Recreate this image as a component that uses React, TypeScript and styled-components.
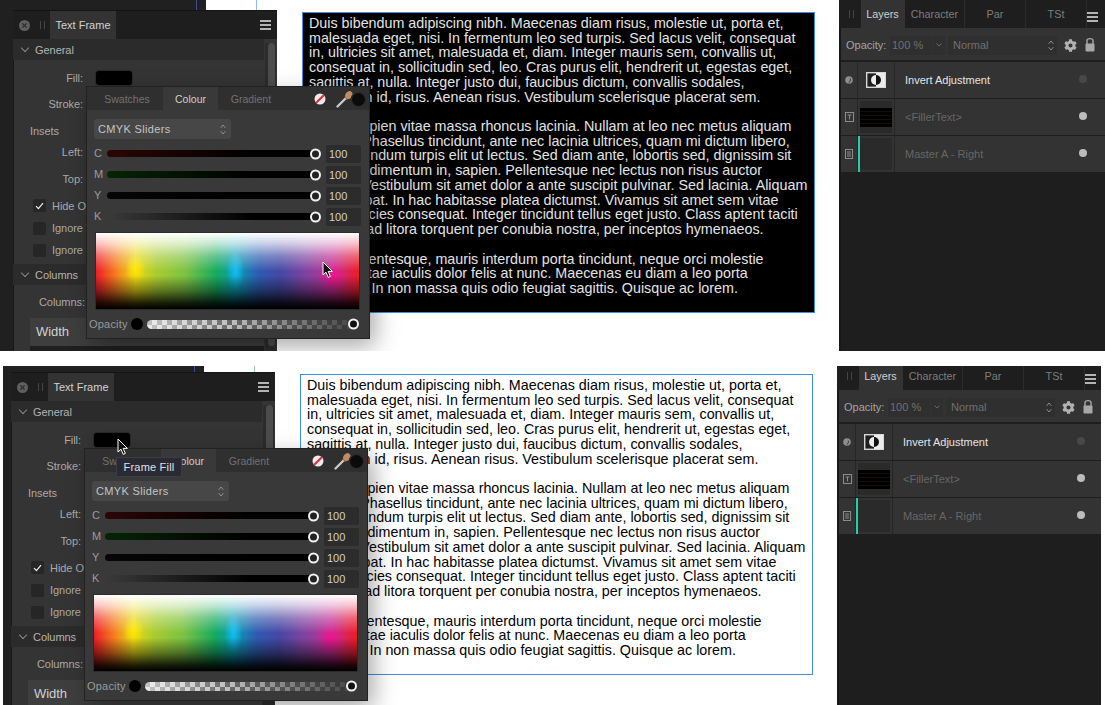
import { FC } from "react";
import styled, { createGlobalStyle } from "styled-components";
import { FaCog } from "react-icons/fa";

const GlobalStyle = createGlobalStyle`
  html, body { margin: 0; padding: 0; background: #fff; }
  body { font-family: "Liberation Sans", Arial, sans-serif; }
`;

// styled components
const Page = styled.div`
  width: 1105px;
  height: 705px;
  overflow: hidden;
  background: #fff;
  display: flex;
  flex-direction: column;
  gap: 15px;
`;

const Shot = styled.div<{ $left: number; $width: number; $height: number }>`
  position: relative;
  display: flex;
  flex: none;
  overflow: hidden;
  background: #fff;
  margin-left: ${(p) => p.$left}px;
  width: ${(p) => p.$width}px;
  height: ${(p) => p.$height}px;
`;

const Strip = styled.div<{ $width: number }>`
  flex: none;
  width: ${(p) => p.$width}px;
  background: #202020;
`;

const LeftColumn = styled.div`
  flex: none;
  width: 264px;
  display: flex;
  flex-direction: column;
`;

const DocEdge = styled.div<{ $height: number }>`
  flex: none;
  height: ${(p) => p.$height}px;
  background: linear-gradient(
    to right,
    #202020 0 183px,
    #3d4a9e 183px 184px,
    #202020 184px 193px,
    #fff 193px 243px,
    #8fbdf0 243px 244.5px,
    #fff 244.5px
  );
`;

const Panel = styled.div`
  flex: 1;
  min-height: 0;
  position: relative;
  overflow: hidden;
  background: #343434;
  border-top: 1px solid #141414;
  box-shadow: inset 1px 0 #171717;
  color: #a9a9a9;
  font-size: 11px;
  letter-spacing: -0.05px;
`;

const PanelHead = styled.div`
  height: 28px;
  display: flex;
  align-items: stretch;
  background: #1e1e1e;
`;

const CloseDot = styled.svg`
  width: 11px;
  height: 11px;
  margin: 9px 0 0 6px;
`;

const Grip = styled.span<{ $left: number }>`
  width: 3px;
  height: 8px;
  margin: 10px 0 0 ${(p) => p.$left}px;
  border-left: 1px solid #444;
  border-right: 1px solid #444;
`;

const HeadTab = styled.div`
  width: 66px;
  margin-left: 5px;
  background: #333;
  color: #d2d2d2;
  font-size: 11px;
  letter-spacing: 0;
  line-height: 28px;
  text-align: center;
`;

const Burger = styled.span`
  margin: 9px 0 0 auto;
  width: 11px;
  height: 2px;
  background: #b4b4b4;
  box-shadow: 0 4px #b4b4b4, 0 8px #b4b4b4;
`;

const PanelBurger = styled(Burger)`
  margin-right: 6px;
`;

const PanelBody = styled.div`
  margin-right: 13px;
`;

const ScrollThumb = styled.div`
  position: absolute;
  top: 32px;
  right: 1px;
  bottom: 0;
  width: 11px;
  background: #2c2c2c;

  &::after {
    content: "";
    position: absolute;
    top: 0;
    bottom: 5px;
    left: 3px;
    width: 7px;
    border-radius: 4px;
    background: #4c4c4c;
  }
`;

const SectionHead = styled.div<{ $gapTop?: number }>`
  height: 21px;
  margin-top: ${(p) => p.$gapTop ?? 0}px;
  display: flex;
  align-items: center;
  gap: 7px;
  padding-left: 9px;
  background: #2b2b2b;
  color: #b4b4b4;
`;

const Chevron = styled.span`
  width: 5px;
  height: 5px;
  margin: -3px 0 0 0;
  border-right: 1px solid #888;
  border-bottom: 1px solid #888;
  transform: rotate(45deg);
`;

const Field = styled.div<{ $h: number; $pad?: number }>`
  height: ${(p) => p.$h}px;
  display: flex;
  align-items: center;
  white-space: nowrap;
  padding-left: ${(p) => p.$pad ?? 0}px;
`;

const FieldLabel = styled.span`
  width: 70px;
  text-align: right;
`;

const WideLabel = styled(FieldLabel)`
  width: 72px;
`;

const Swatch = styled.span`
  width: 36px;
  height: 14px;
  margin-left: 13px;
  border-radius: 3px;
  background: #000;
  box-shadow: 0 0 0 1px #2a2a2a;
`;

const CheckBox = styled.span`
  width: 13px;
  height: 13px;
  margin-right: 6px;
  border-radius: 2px;
  background: #262626;
  display: flex;
  align-items: center;
  justify-content: center;
`;

const BodyGap = styled.div`
  height: 4px;
`;

const TableHead = styled.div`
  height: 28px;
  margin-left: 17px;
  padding-left: 6px;
  background: #3e3e3e;
  color: #d0d0d0;
  font-size: 13px;
  line-height: 28px;
`;

const TableRow = styled.div`
  height: 10px;
  margin-left: 17px;
  background: #1f1f1f;
`;

const Popover = styled.div<{ $left: number; $top: number }>`
  position: absolute;
  left: ${(p) => p.$left}px;
  top: ${(p) => p.$top}px;
  width: 282px;
  height: 251px;
  z-index: 3;
  background: #393939;
  color: #a4a4a4;
  font-size: 10.5px;
  box-shadow: 0 0 0 1px #222, 6px 8px 22px rgba(0, 0, 0, 0.35);
`;

const PopHead = styled.div`
  height: 23px;
  position: relative;
  display: flex;
  padding-left: 4px;
  background: #2f2f2f;
`;

const PopTab = styled.div<{ $w: number; $on?: boolean }>`
  width: ${(p) => p.$w}px;
  text-align: center;
  line-height: 24px;
  background: ${(p) => (p.$on ? "#393939" : "transparent")};
  color: ${(p) => (p.$on ? "#cfcfcf" : "#727272")};
`;

const PopTools = styled.div`
  position: absolute;
  right: 4px;
  top: 3px;
  display: flex;
  align-items: center;
`;

const NoFill = styled.svg`
  width: 12px;
  height: 12px;
  margin-right: 10px;
`;

const Pipette = styled.svg`
  width: 18px;
  height: 18px;
  margin-right: -2px;
`;

const CurrentColour = styled.span`
  width: 13px;
  height: 13px;
  border-radius: 50%;
  background: #0b0b0b;
  box-shadow: 0 0 0 1.5px #2c2c2c;
`;

const PopBody = styled.div`
  padding: 9px 7px 0;
`;

const SelectBox = styled.div`
  width: 137px;
  height: 20px;
  padding: 0 5px 0 4px;
  box-sizing: border-box;
  display: flex;
  align-items: center;
  justify-content: space-between;
  border-radius: 3px;
  background: #474747;
  color: #c4c4c4;
  font-size: 11px;
  letter-spacing: 0.35px;
`;

const Sliders = styled.div`
  margin-top: 4px;
`;

const SliderRow = styled.div`
  height: 21px;
  display: flex;
  align-items: center;
`;

const SliderName = styled.span`
  width: 13px;
  margin-top: -2px;
  font-size: 11px;
  color: #9b9b9b;
`;

const Track = styled.div<{ $tint: string }>`
  position: relative;
  width: 208px;
  height: 7px;
  border-radius: 4px;
  background: linear-gradient(to right, ${(p) => p.$tint}, #000 70%);
`;

const Thumb = styled.span`
  position: absolute;
  right: -6px;
  top: 50%;
  width: 7px;
  height: 7px;
  transform: translateY(-50%);
  border-radius: 50%;
  border: 2px solid #f2f2f2;
  background: #222;
`;

const ValueBox = styled.span`
  width: 35px;
  height: 18px;
  margin-left: 11px;
  padding-left: 3px;
  box-sizing: border-box;
  background: #2c2c2c;
  border-radius: 2px;
  color: #d0d0d0;
  font-size: 11px;
  line-height: 19px;
`;

const Spectrum = styled.div`
  width: 263px;
  height: 76px;
  margin: 6px 0 0 2px;
  background:
    linear-gradient(
      to bottom,
      #fff 0%,
      rgba(255, 255, 255, 0.72) 14%,
      rgba(255, 255, 255, 0.32) 30%,
      rgba(255, 255, 255, 0) 50%
    ),
    linear-gradient(
      to bottom,
      rgba(0, 0, 0, 0) 56%,
      rgba(0, 0, 0, 0.42) 76%,
      rgba(0, 0, 0, 0.85) 92%,
      #000 100%
    ),
    radial-gradient(ellipse 10px 14px at 15% 47%, #ffe600, rgba(255, 230, 0, 0) 100%),
    radial-gradient(ellipse 9px 20px at 53% 50%, #12bdf2, rgba(18, 189, 242, 0) 100%),
    radial-gradient(ellipse 14px 16px at 90% 58%, #ee1490, rgba(238, 20, 144, 0) 100%),
    linear-gradient(
      to right,
      #ee1c25 0%,
      #f5821f 8%,
      #ead816 15%,
      #a8cc30 23%,
      #7cc242 34%,
      #14aa60 46%,
      #0a9cb4 53%,
      #2f5ab0 62%,
      #4548a4 70%,
      #8043a0 80%,
      #c42e94 90%,
      #ee1c25 100%
    );
  box-shadow: 0 0 0 1px #2c2c2c;
`;

const OpacityRow = styled.div`
  position: relative;
  height: 20px;
  margin: 5px 0 0 -5px;
  display: flex;
  align-items: center;
`;

const OpacityName = styled.span`
  width: 42px;
  color: #999;
  font-size: 11px;
  letter-spacing: 0.2px;
`;

const OpacityDot = styled.span`
  width: 12px;
  height: 12px;
  border-radius: 50%;
  background: #000;
`;

const OpacityBar = styled.div`
  position: relative;
  width: 206px;
  height: 9px;
  margin-left: 4px;
  border-radius: 5px 0 0 5px;
  background:
    linear-gradient(to right, rgba(255, 255, 255, 0.6), rgba(57, 57, 57, 0.1) 40%, rgba(45, 45, 45, 0.85) 100%),
    repeating-conic-gradient(#cfcfcf 0 25%, #6e6e6e 0 50%) 0 0 / 10px 10px;
`;

const OpacityThumb = styled(Thumb)`
  background: #111;
`;

const Canvas = styled.div`
  flex: none;
  width: 562px;
  box-sizing: border-box;
  padding-left: 25px;
`;

const TextFrame = styled.div<{ $dark: boolean; $top: number }>`
  width: 513px;
  height: 301px;
  margin-top: ${(p) => p.$top}px;
  padding: 3px 0 0 6px;
  box-sizing: border-box;
  border: 1px solid #3f8de0;
  background: ${(p) => (p.$dark ? "#000" : "#fff")};
  color: ${(p) => (p.$dark ? "#e4e4e4" : "#000")};
  font-size: 14.3px;
  line-height: 14.72px;
`;

const TextLine = styled.div`
  height: 14.72px;
  white-space: pre;
`;

const RightPanel = styled.div`
  flex: 1;
  display: flex;
  flex-direction: column;
  background: #1e1e1e;
  box-shadow: inset 2px 0 #191919;
  color: #a9a9a9;
  font-size: 11px;
`;

const RightHead = styled.div<{ $height: number }>`
  flex: none;
  height: ${(p) => p.$height}px;
  display: flex;
  align-items: flex-end;
  background: #1e1e1e;
`;

const RightTab = styled.div<{ $w: number; $on?: boolean }>`
  width: ${(p) => p.$w}px;
  height: 100%;
  display: flex;
  align-items: flex-end;
  justify-content: center;
  padding-bottom: 8px;
  box-sizing: border-box;
  font-size: 10.8px;
  background: ${(p) => (p.$on ? "#333" : "transparent")};
  color: ${(p) => (p.$on ? "#cfcfcf" : "#7d7d7d")};
  border-right: 1px solid ${(p) => (p.$on ? "transparent" : "#2c2c2c")};
`;

const RightGrip = styled(Grip)`
  align-self: flex-end;
  margin: 0 7px 10px 10px;
`;

const RightBurger = styled(Burger)`
  align-self: flex-end;
  margin: 0 7px 14px auto;
`;

const Toolbar = styled.div`
  flex: none;
  height: 32px;
  margin-left: 2px;
  padding: 2px 0 0 5px;
  box-sizing: border-box;
  display: flex;
  align-items: center;
  background: #333;
`;

const ToolLabel = styled.span`
  width: 44px;
  color: #a4a4a4;
`;

const ToolInput = styled.span<{ $w: number; $gap: number; $inset: number }>`
  width: ${(p) => p.$w}px;
  height: 19px;
  margin-left: ${(p) => p.$gap}px;
  padding: 0 3px 0 ${(p) => p.$inset}px;
  box-sizing: border-box;
  display: flex;
  align-items: center;
  justify-content: space-between;
  background: #2f2f2f;
  color: #6f6f6f;
`;

const GearIcon = styled(FaCog)`
  width: 13px;
  height: 13px;
  margin-left: 7px;
  color: #b2b2b2;
`;

const LockIcon = styled.svg`
  width: 10px;
  height: 15px;
  margin: -2px 0 0 8px;
`;

const LayerList = styled.div`
  margin: 2px 0 0 2px;
  display: flex;
  flex-direction: column;
  gap: 1px;
`;

const LayerRow = styled.div`
  height: 36px;
  display: flex;
  align-items: stretch;
  background: #333;
`;

const LayerKind = styled.div`
  width: 16px;
  flex: none;
  display: flex;
  align-items: center;
  justify-content: center;
  border-right: 1px solid #262626;
`;

const LayerThumb = styled.div<{ $accent?: boolean }>`
  position: relative;
  width: 36px;
  flex: none;
  display: flex;
  align-items: center;
  justify-content: center;
  border-right: 1px solid #262626;
  box-shadow: ${(p) => (p.$accent ? "inset 2px 0 #1fd0a8" : "none")};
`;

const ThumbFill = styled.div`
  width: 32px;
  height: 32px;
  display: flex;
  align-items: center;
  background: #2a2a2a;
`;

const ThumbPage = styled.div`
  width: 100%;
  height: 19px;
  background: repeating-linear-gradient(to bottom, #000 0 3px, #1b0c0c 3px 4px);
`;

const LayerName = styled.div<{ $on?: boolean }>`
  flex: 1;
  padding-left: 10px;
  line-height: 36px;
  color: ${(p) => (p.$on ? "#e4e4e4" : "#666")};
`;

const VisDot = styled.span<{ $dim?: boolean }>`
  width: 8px;
  height: 8px;
  margin: 13px 18px 0 0;
  border-radius: 50%;
  background: ${(p) => (p.$dim ? "#484848" : "#bcbcbc")};
`;

const Tooltip = styled.div`
  position: absolute;
  left: 114px;
  top: 92px;
  width: 64px;
  height: 18px;
  z-index: 5;
  background: #2a2a35;
  box-shadow: 0 0 0 1px #3c3c44;
  color: #e0e0e0;
  font-size: 11px;
  letter-spacing: 0.2px;
  line-height: 18px;
  text-align: center;
`;

const Cursor = styled.svg<{ $left: number; $top: number }>`
  position: absolute;
  left: ${(p) => p.$left}px;
  top: ${(p) => p.$top}px;
  width: 12px;
  height: 18px;
  z-index: 6;
`;

// =============================================================
const PARAGRAPHS = [
  [
    "Duis bibendum adipiscing nibh. Maecenas diam risus, molestie ut, porta et,",
    "malesuada eget, nisi. In fermentum leo sed turpis. Sed lacus velit, consequat",
    "in, ultricies sit amet, malesuada et, diam. Integer mauris sem, convallis ut,",
    "consequat in, sollicitudin sed, leo. Cras purus elit, hendrerit ut, egestas eget,",
    "sagittis at, nulla. Integer justo dui, faucibus dictum, convallis sodales,",
    "Morbi non id, risus. Aenean risus. Vestibulum scelerisque placerat sem.",
  ],
  [
    "Donec sapien vitae massa rhoncus lacinia. Nullam at leo nec metus aliquam",
    "Aenean Phasellus tincidunt, ante nec lacinia ultrices, quam mi dictum libero,",
    "Nam bibendum turpis elit ut lectus. Sed diam ante, lobortis sed, dignissim sit",
    "Proin condimentum in, sapien. Pellentesque nec lectus non risus auctor",
    "Aenean Vestibulum sit amet dolor a ante suscipit pulvinar. Sed lacinia. Aliquam",
    "Aliquam pat. In hac habitasse platea dictumst. Vivamus sit amet sem vitae",
    "Nulla ultricies consequat. Integer tincidunt tellus eget justo. Class aptent taciti",
    "molestie ad litora torquent per conubia nostra, per inceptos hymenaeos.",
  ],
  [
    "Proin pellentesque, mauris interdum porta tincidunt, neque orci molestie",
    "Nullam vitae iaculis dolor felis at nunc. Maecenas eu diam a leo porta",
    "Vivamus. In non massa quis odio feugiat sagittis. Quisque ac lorem.",
  ],
];

const SLIDERS = [
  { name: "C", tint: "#2a0606" },
  { name: "M", tint: "#062406" },
  { name: "Y", tint: "#060606" },
  { name: "K", tint: "#3a3a3a" },
];

type SceneProps = {
  dark: boolean;
  left: number;
  width: number;
  height: number;
  strip: number;
  band: number;
  cursor: { x: number; y: number };
  tooltip?: boolean;
};
// =============================================================

const Check = () => (
  <svg width="9" height="8" viewBox="0 0 9 8">
    <path d="M1 4.2 L3.4 6.6 L8 1.2" fill="none" stroke="#eee" strokeWidth="1.2" />
  </svg>
);

const Updown = () => (
  <svg width="6" height="11" viewBox="0 0 6 11">
    <path d="M0.7 3.8 L3 1 L5.3 3.8 M0.7 7.2 L3 10 L5.3 7.2" fill="none" stroke="#999" strokeWidth="0.9" />
  </svg>
);

const Scene: FC<SceneProps> = ({ dark, left, width, height, strip, band, cursor, tooltip }) => (
  <Shot $left={left} $width={width} $height={height}>
    <Strip $width={strip} />
    <LeftColumn>
      <DocEdge $height={band} />
      <Panel>
        <PanelHead>
          <CloseDot viewBox="0 0 11 11">
            <circle cx="5.5" cy="5.5" r="5.5" fill="#5f5f5f" />
            <path d="M3.4 3.4 L7.6 7.6 M7.6 3.4 L3.4 7.6" stroke="#2a2a2a" strokeWidth="1.2" />
          </CloseDot>
          <Grip $left={10} />
          <HeadTab>Text Frame</HeadTab>
          <PanelBurger />
        </PanelHead>
        <ScrollThumb />
        <PanelBody>
          <SectionHead>
            <Chevron />
            General
          </SectionHead>
          <BodyGap />
          <Field $h={27}>
            <FieldLabel>Fill:</FieldLabel>
            <Swatch />
          </Field>
          <Field $h={26}>
            <FieldLabel>Stroke:</FieldLabel>
          </Field>
          <Field $h={28} $pad={17}>
            Insets
          </Field>
          <Field $h={14}>
            <FieldLabel>Left:</FieldLabel>
          </Field>
          <Field $h={40}>
            <FieldLabel>Top:</FieldLabel>
          </Field>
          <Field $h={13} $pad={20}>
            <CheckBox>
              <Check />
            </CheckBox>
            Hide Overflow
          </Field>
          <Field $h={32} $pad={20}>
            <CheckBox />
            Ignore Text Wrap
          </Field>
          <Field $h={12} $pad={20}>
            <CheckBox />
            Ignore Baseline
          </Field>
          <SectionHead $gapTop={8}>
            <Chevron />
            Columns
          </SectionHead>
          <Field $h={33}>
            <WideLabel>Columns:</WideLabel>
          </Field>
          <TableHead>Width</TableHead>
          <TableRow />
        </PanelBody>
      </Panel>
    </LeftColumn>

    <Canvas>
      <TextFrame $dark={dark} $top={band + 2}>
        {PARAGRAPHS.map((lines, i) => (
          <div key={i}>
            {lines.map((line) => (
              <TextLine key={line}>{line}</TextLine>
            ))}
            <TextLine />
          </div>
        ))}
      </TextFrame>
    </Canvas>

    <RightPanel>
      <RightHead $height={band + 18}>
        <RightGrip $left={0} />
        <RightTab $w={44} $on>
          Layers
        </RightTab>
        <RightTab $w={60}>Character</RightTab>
        <RightTab $w={61}>Par</RightTab>
        <RightTab $w={61}>TSt</RightTab>
        <RightBurger />
      </RightHead>
      <Toolbar>
        <ToolLabel>Opacity:</ToolLabel>
        <ToolInput $w={42} $gap={0} $inset={2}>
          100 %
        </ToolInput>
        <ToolInput $w={12} $gap={1} $inset={3}>
          <svg width="6" height="4" viewBox="0 0 6 4">
            <path d="M0.5 0.5 L3 3 L5.5 0.5" fill="none" stroke="#666" />
          </svg>
        </ToolInput>
        <ToolInput $w={109} $gap={3} $inset={5}>
          Normal
          <Updown />
        </ToolInput>
        <GearIcon />
        <LockIcon viewBox="0 0 10 15">
          <path d="M2 7 V3.6 C2 1 8 1 8 3.6 V7" fill="none" stroke="#a8a8a8" strokeWidth="1.4" />
          <rect x="0.5" y="6.5" width="9" height="8" rx="1" fill="#a8a8a8" />
        </LockIcon>
      </Toolbar>
      <LayerList>
        <LayerRow>
          <LayerKind>
            <svg width="8" height="8" viewBox="0 0 8 8">
              <circle cx="4" cy="4" r="3.8" fill="#8e8e8e" />
              <path d="M4.6 1.4 A3 3 0 0 1 3 6.8 A4.5 4.5 0 0 0 4.6 1.4 Z" fill="#2a2a2a" />
            </svg>
          </LayerKind>
          <LayerThumb>
            <svg width="20" height="16" viewBox="0 0 20 16">
              <rect x="0.7" y="0.7" width="18.6" height="14.6" fill="#1f1f1f" stroke="#d8d8d8" strokeWidth="1.4" />
              <rect x="10" y="1" width="9" height="14" fill="#ececec" />
              <path d="M10 3 A5 5 0 0 0 10 13 Z" fill="#ececec" />
              <path d="M10 3 A5 5 0 0 1 10 13 Z" fill="#111" />
            </svg>
          </LayerThumb>
          <LayerName $on>Invert Adjustment</LayerName>
          <VisDot $dim />
        </LayerRow>
        <LayerRow>
          <LayerKind>
            <svg width="9" height="10" viewBox="0 0 9 10">
              <rect x="0.5" y="0.5" width="8" height="9" fill="none" stroke="#8c8c8c" />
              <path d="M2.6 3 H6.4 M4.5 3 V7.4" stroke="#8c8c8c" fill="none" />
            </svg>
          </LayerKind>
          <LayerThumb>
            <ThumbFill>
              <ThumbPage />
            </ThumbFill>
          </LayerThumb>
          <LayerName>&lt;FillerText&gt;</LayerName>
          <VisDot />
        </LayerRow>
        <LayerRow>
          <LayerKind>
            <svg width="8" height="10" viewBox="0 0 8 10">
              <rect x="0.5" y="0.5" width="7" height="9" fill="none" stroke="#8c8c8c" />
              <path d="M2 3 H6 M2 5 H6 M2 7 H6" stroke="#8c8c8c" />
            </svg>
          </LayerKind>
          <LayerThumb $accent>
            <ThumbFill />
          </LayerThumb>
          <LayerName>Master A - Right</LayerName>
          <VisDot />
        </LayerRow>
      </LayerList>
    </RightPanel>

    <Popover $left={strip + 74} $top={band + 77}>
      <PopHead>
        <PopTab $w={72}>Swatches</PopTab>
        <PopTab $w={55} $on>
          Colour
        </PopTab>
        <PopTab $w={66}>Gradient</PopTab>
        <PopTools>
          <NoFill viewBox="0 0 12 12">
            <circle cx="6" cy="6" r="5.5" fill="#ececec" />
            <path d="M2.2 9.8 L9.8 2.2" stroke="#d8323c" strokeWidth="2.2" />
          </NoFill>
          <Pipette viewBox="0 0 18 18">
            <path d="M1.5 16.5 L10 8" stroke="#c8c8c8" strokeWidth="2.4" strokeLinecap="round" />
            <path d="M9 6.5 L11.8 9.3" stroke="#a06f4e" strokeWidth="2" />
            <ellipse cx="13" cy="5" rx="3.4" ry="4" transform="rotate(45 13 5)" fill="#c38a63" />
          </Pipette>
          <CurrentColour />
        </PopTools>
      </PopHead>
      <PopBody>
        <SelectBox>
          CMYK Sliders
          <Updown />
        </SelectBox>
        <Sliders>
          {SLIDERS.map((s) => (
            <SliderRow key={s.name}>
              <SliderName>{s.name}</SliderName>
              <Track $tint={s.tint}>
                <Thumb />
              </Track>
              <ValueBox>100</ValueBox>
            </SliderRow>
          ))}
        </Sliders>
        <Spectrum />
        <OpacityRow>
          <OpacityName>Opacity</OpacityName>
          <OpacityDot />
          <OpacityBar>
            <OpacityThumb />
          </OpacityBar>
        </OpacityRow>
      </PopBody>
    </Popover>

    {tooltip && <Tooltip>Frame Fill</Tooltip>}

    <Cursor $left={cursor.x} $top={cursor.y} viewBox="0 0 12 18">
      <path
        d="M1 1 L1 14 L4 11.2 L6.2 16.4 L8.4 15.4 L6.2 10.4 L10.4 10.4 Z"
        fill="#111"
        stroke="#fff"
        strokeWidth="1"
      />
    </Cursor>
  </Shot>
);

const App: FC = () => (
  <Page>
    <GlobalStyle />
    <Scene dark left={0} width={1105} height={351} strip={13} band={10} cursor={{ x: 322, y: 261 }} />
    <Scene
      dark={false}
      left={3}
      width={1098}
      height={339}
      strip={8}
      band={6}
      cursor={{ x: 114, y: 72 }}
      tooltip
    />
  </Page>
);

export default App;
